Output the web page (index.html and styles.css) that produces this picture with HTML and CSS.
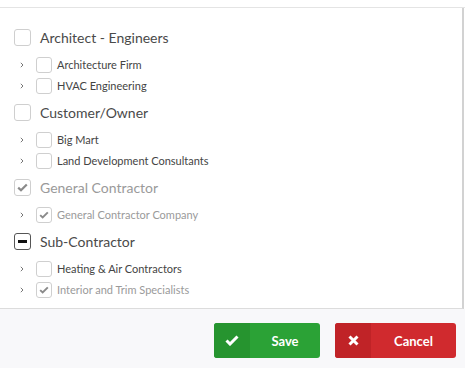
FILE: index.html
```html
<!DOCTYPE html>
<html lang="en">
<head>
    <meta charset="UTF-8">
    <meta name="viewport" content="width=device-width, initial-scale=1.0">
    <title>Company Types</title>
    <link rel="stylesheet" href="styles.css">
</head>
<body>
    <div class="panel">
        <div class="tree">
            <!-- Architect - Engineers -->
            <div class="group">
                <div class="main-row">
                    <span class="box"></span>
                    <span class="main-label">Architect - Engineers</span>
                </div>
                <div class="sub-list">
                    <div class="sub-row">
                        <span class="chev"><svg width="4" height="6" viewBox="0 0 4 6"><path d="M0.8 0.8L3 3L0.8 5.2" fill="none" stroke="#777" stroke-width="1"/></svg></span>
                        <span class="box small"></span>
                        <span class="sub-label">Architecture Firm</span>
                    </div>
                    <div class="sub-row">
                        <span class="chev"><svg width="4" height="6" viewBox="0 0 4 6"><path d="M0.8 0.8L3 3L0.8 5.2" fill="none" stroke="#777" stroke-width="1"/></svg></span>
                        <span class="box small"></span>
                        <span class="sub-label">HVAC Engineering</span>
                    </div>
                </div>
            </div>

            <!-- Customer/Owner -->
            <div class="group">
                <div class="main-row">
                    <span class="box"></span>
                    <span class="main-label">Customer/Owner</span>
                </div>
                <div class="sub-list">
                    <div class="sub-row">
                        <span class="chev"><svg width="4" height="6" viewBox="0 0 4 6"><path d="M0.8 0.8L3 3L0.8 5.2" fill="none" stroke="#777" stroke-width="1"/></svg></span>
                        <span class="box small"></span>
                        <span class="sub-label">Big Mart</span>
                    </div>
                    <div class="sub-row">
                        <span class="chev"><svg width="4" height="6" viewBox="0 0 4 6"><path d="M0.8 0.8L3 3L0.8 5.2" fill="none" stroke="#777" stroke-width="1"/></svg></span>
                        <span class="box small"></span>
                        <span class="sub-label">Land Development Consultants</span>
                    </div>
                </div>
            </div>

            <!-- General Contractor (disabled) -->
            <div class="group disabled">
                <div class="main-row">
                    <span class="box"><svg width="11" height="9" viewBox="0 0 11 9"><path d="M1.2 4.6L4 7.3L9.8 1.5" fill="none" stroke="#8a8a8a" stroke-width="2.2"/></svg></span>
                    <span class="main-label">General Contractor</span>
                </div>
                <div class="sub-list">
                    <div class="sub-row">
                        <span class="chev"><svg width="4" height="6" viewBox="0 0 4 6"><path d="M0.8 0.8L3 3L0.8 5.2" fill="none" stroke="#777" stroke-width="1"/></svg></span>
                        <span class="box small"><svg width="10" height="8" viewBox="0 0 11 9"><path d="M1.2 4.6L4 7.3L9.8 1.5" fill="none" stroke="#8a8a8a" stroke-width="2.2"/></svg></span>
                        <span class="sub-label">General Contractor Company</span>
                    </div>
                </div>
            </div>

            <!-- Sub-Contractor (partial) -->
            <div class="group">
                <div class="main-row">
                    <span class="box partial"><span class="minus"></span></span>
                    <span class="main-label">Sub-Contractor</span>
                </div>
                <div class="sub-list">
                    <div class="sub-row">
                        <span class="chev"><svg width="4" height="6" viewBox="0 0 4 6"><path d="M0.8 0.8L3 3L0.8 5.2" fill="none" stroke="#777" stroke-width="1"/></svg></span>
                        <span class="box small"></span>
                        <span class="sub-label">Heating &amp; Air Contractors</span>
                    </div>
                    <div class="sub-row muted">
                        <span class="chev"><svg width="4" height="6" viewBox="0 0 4 6"><path d="M0.8 0.8L3 3L0.8 5.2" fill="none" stroke="#777" stroke-width="1"/></svg></span>
                        <span class="box small"><svg width="10" height="8" viewBox="0 0 11 9"><path d="M1.2 4.6L4 7.3L9.8 1.5" fill="none" stroke="#8a8a8a" stroke-width="2.2"/></svg></span>
                        <span class="sub-label">Interior and Trim Specialists</span>
                    </div>
                </div>
            </div>
        </div>

        <div class="footer">
            <button class="btn btn-save">
                <span class="btn-icon"><svg width="14" height="11" viewBox="0 0 14 11"><path d="M1.5 5.5L5 9L12.5 1.5" fill="none" stroke="#fff" stroke-width="3"/></svg></span>
                <span class="btn-text">Save</span>
            </button>
            <button class="btn btn-cancel">
                <span class="btn-icon"><svg width="11" height="11" viewBox="0 0 11 11"><path d="M1.5 1.5L9.5 9.5M9.5 1.5L1.5 9.5" fill="none" stroke="#fff" stroke-width="3"/></svg></span>
                <span class="btn-text">Cancel</span>
            </button>
        </div>
    </div>
</body>
</html>
```

FILE: styles.css
```css
body {
    margin: 0;
    background: #fff;
    font-family: Lato, "Open Sans", Arial, sans-serif;
    color: #444;
}
.panel {
    margin-top: 7px;
    border-top: 1px solid #e4e4e4;
}
.tree {
    height: 284px;
    padding: 16px 0 0 14px;
    border-right: 2px solid #d2d2d2;
    margin-right: 1px;
    border-bottom: 1px solid #dcdcdc;
}
.main-row {
    display: flex;
    align-items: center;
    height: 27px;
}
.box {
    width: 15px;
    height: 15px;
    border: 1px solid #cfcfcf;
    border-radius: 3px;
    display: flex;
    align-items: center;
    justify-content: center;
    margin-right: 9px;
    flex-shrink: 0;
    background: #fff;
}
.box.small {
    width: 14px;
    height: 14px;
    margin-right: 5px;
}
.box.partial {
    border-color: #555;
}
.minus {
    width: 9px;
    height: 3px;
    background: #111;
}
.main-label {
    font-size: 14px;
    color: #4a4a4a;
}
.sub-list {
    margin: 3px 0;
}
.sub-row {
    display: flex;
    align-items: center;
    height: 21px;
    padding-left: 6px;
}
.chev {
    width: 16px;
    display: flex;
    align-items: center;
}
.sub-label {
    font-size: 11px;
    color: #444;
}
.disabled .main-label,
.disabled .sub-label,
.muted .sub-label {
    color: #9a9a9a;
}
.footer {
    background: #f8f8fa;
    height: 59px;
    display: flex;
    justify-content: flex-end;
    align-items: flex-start;
    gap: 15px;
    padding: 14px 9px 0 0;
    box-sizing: border-box;
}
.btn {
    height: 35px;
    border: none;
    border-radius: 3px;
    padding: 0;
    display: flex;
    align-items: stretch;
    color: #fff;
    font-family: Lato, Arial, sans-serif;
    font-weight: bold;
    font-size: 13px;
    cursor: pointer;
    overflow: hidden;
}
.btn-icon {
    width: 36px;
    display: flex;
    align-items: center;
    justify-content: center;
}
.btn-text {
    flex: 1;
    display: flex;
    align-items: center;
    justify-content: center;
}
.btn-save {
    width: 106px;
    background: #2ba236;
}
.btn-save .btn-icon {
    background: #26942f;
}
.btn-cancel {
    width: 121px;
    background: #d02a2e;
}
.btn-cancel .btn-icon {
    background: #c02327;
}
```
